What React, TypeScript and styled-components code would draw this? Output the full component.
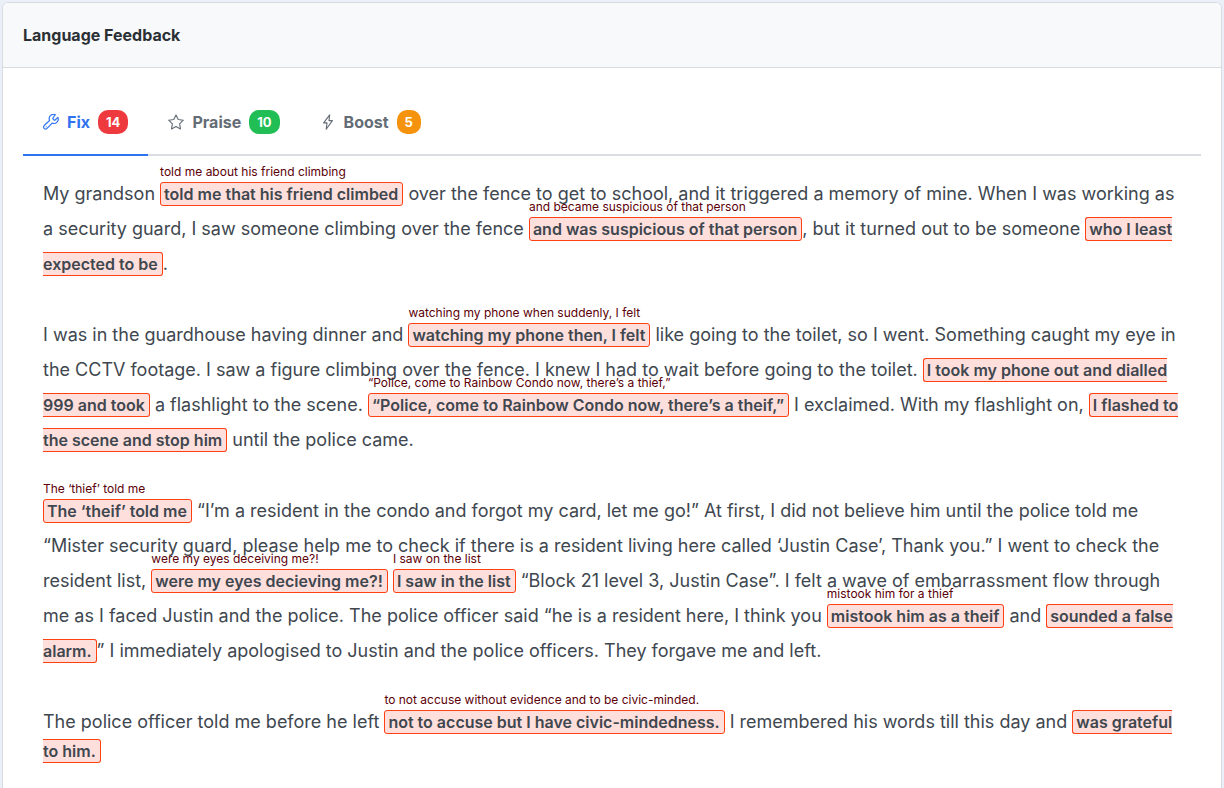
import React from "react";
import styled, { createGlobalStyle } from "styled-components";

const GlobalStyle = createGlobalStyle`
  *, *::before, *::after { box-sizing: border-box; }
  body {
    margin: 0;
    background: #ebeff7;
    color: #40474f;
    font-family: Inter, "Liberation Sans", sans-serif;
    font-size: 16px;
    line-height: 24px;
  }
`;

const Page = styled.main`
  display: flex;
  min-height: 100vh;
  padding: 2px 2px 0;
`;

const Card = styled.section`
  flex: 1;
  min-width: 0;
  background: #fff;
  border: 1px solid #d8dce2;
  border-bottom: 0;
  border-radius: 6px 6px 0 0;
`;

const CardHeader = styled.header`
  padding: 20px;
  background: #f7f9fb;
  border-bottom: 1px solid #d8dce2;
  border-radius: 5px 5px 0 0;
`;

const Title = styled.h1`
  margin: 0;
  font-size: 16px;
  line-height: 24px;
  font-weight: 700;
  color: #2b3035;
`;

const CardBody = styled.div`
  padding: 20px 20px 0;
`;

const TabList = styled.div`
  display: flex;
  border-bottom: 2px solid #d9dde1;
`;

const Tab = styled.button<{ $active?: boolean }>`
  display: flex;
  align-items: center;
  gap: 8px;
  margin: 0 0 -2px;
  padding: 22px 20px 20px;
  border: 0;
  border-bottom: 2px solid ${(p) => (p.$active ? "#2f73f0" : "transparent")};
  background: none;
  color: ${(p) => (p.$active ? "#2f73f0" : "#646c75")};
  font: 700 16px/24px Inter, "Liberation Sans", sans-serif;
  cursor: pointer;
`;

const TabIcon = styled.svg`
  width: 16px;
  height: 16px;
  fill: none;
  stroke: currentColor;
  stroke-linecap: round;
  stroke-linejoin: round;
`;

const Badge = styled.span<{ $color: string }>`
  padding: 0 8px;
  border-radius: 10px;
  background: ${(p) => p.$color};
  color: #fff;
  font-size: 13px;
  line-height: 24px;
  font-weight: 700;
`;

const Essay = styled.article`
  padding: 20px 20px 0;
`;

const Paragraph = styled.p`
  margin: 0;

  & + & {
    margin-top: 36px;
  }
`;

const Prose = styled.span`
  font-size: 18px;
  line-height: 35px;
`;

const Mark = styled.mark`
  position: relative;
  padding: 1px 4px 1px 3px;
  border: 1px solid #ff4013;
  border-radius: 3px;
  background: #ffdfdc;
  color: #40474f;
  font-size: 16px;
  font-weight: 600;
`;

const Suggestion = styled.span`
  position: absolute;
  left: -1px;
  bottom: 100%;
  color: #5c0007;
  font-size: 12px;
  line-height: 22px;
  font-weight: 400;
  white-space: nowrap;
`;

type Piece = string | { wrong: string; fix?: string };

const paragraphs: Piece[][] = [
  [
    "My grandson ",
    { wrong: "told me that his friend climbed", fix: "told me about his friend climbing" },
    " over the fence to get to school, and it triggered a memory of mine. When I was working as a security guard, I saw someone climbing over the fence ",
    { wrong: "and was suspicious of that person", fix: "and became suspicious of that person" },
    ", but it turned out to be someone ",
    { wrong: "who I least expected to be" },
    ".",
  ],
  [
    "I was in the guardhouse having dinner and ",
    { wrong: "watching my phone then, I felt", fix: "watching my phone when suddenly, I felt" },
    " like going to the toilet, so I went. Something caught my eye in the CCTV footage. I saw a figure climbing over the fence. I knew I had to wait before going to the toilet. ",
    { wrong: "I took my phone out and dialled 999 and took" },
    " a flashlight to the scene. ",
    { wrong: "“Police, come to Rainbow Condo now, there’s a theif,”", fix: "“Police, come to Rainbow Condo now, there’s a thief,”" },
    " I exclaimed. With my flashlight on, ",
    { wrong: "I flashed to the scene and stop him" },
    " until the police came.",
  ],
  [
    { wrong: "The ‘theif’ told me", fix: "The ‘thief’ told me" },
    " “I’m a resident in the condo and forgot my card, let me go!” At first, I did not believe him until the police told me “Mister security guard, please help me to check if there is a resident living here called ‘Justin Case’, Thank you.” I went to check the resident list, ",
    { wrong: "were my eyes decieving me?!", fix: "were my eyes deceiving me?!" },
    " ",
    { wrong: "I saw in the list", fix: "I saw on the list" },
    " “Block 21 level 3, Justin Case”. I felt a wave of embarrassment flow through me as I faced Justin and the police. The police officer said “he is a resident here, I think you ",
    { wrong: "mistook him as a theif", fix: "mistook him for a thief" },
    " and ",
    { wrong: "sounded a false alarm." },
    "” I immediately apologised to Justin and the police officers. They forgave me and left.",
  ],
  [
    "The police officer told me before he left ",
    { wrong: "not to accuse but I have civic-mindedness.", fix: "to not accuse without evidence and to be civic-minded." },
    " I remembered his words till this day and ",
    { wrong: "was grateful to him." },
  ],
];

const WrenchIcon = () => (
  <TabIcon viewBox="1 1 22 22" strokeWidth="1.6" aria-hidden="true">
    <path d="M14.7 6.3a1 1 0 0 0 0 1.4l1.6 1.6a1 1 0 0 0 1.4 0l3.77-3.77a6 6 0 0 1-7.94 7.94l-6.91 7.41a2.8 2.8 0 0 1-4-4l7.41-6.91a6 6 0 0 1 7.94-7.94z" />
    <path d="M5.4 18.5v.1" />
  </TabIcon>
);

const StarIcon = () => (
  <TabIcon viewBox="0 0 16 16" strokeWidth="1.1" aria-hidden="true">
    <path d="M8 .9 10.2 5.5 15.3 6.2 11.6 9.8 12.5 14.9 8 12.5 3.5 14.9 4.4 9.8.7 6.2 5.8 5.5Z" />
  </TabIcon>
);

const BoltIcon = () => (
  <TabIcon viewBox="0 0 16 16" strokeWidth="1.1" aria-hidden="true">
    <path d="M9.7.8 3.6 8.9H7L6.2 15.2 12.4 6.6H9Z" />
  </TabIcon>
);

const tabs = [
  { label: "Fix", count: 14, color: "#ee3a3e", Icon: WrenchIcon },
  { label: "Praise", count: 10, color: "#21bd55", Icon: StarIcon },
  { label: "Boost", count: 5, color: "#f5930f", Icon: BoltIcon },
];

export default function App() {
  return (
    <>
      <GlobalStyle />
      <Page>
        <Card>
          <CardHeader>
            <Title>Language Feedback</Title>
          </CardHeader>
          <CardBody>
            <TabList role="tablist">
              {tabs.map(({ label, count, color, Icon }, i) => (
                <Tab key={label} type="button" role="tab" aria-selected={i === 0} $active={i === 0}>
                  <Icon />
                  <span>{label}</span>
                  <Badge $color={color}>{count}</Badge>
                </Tab>
              ))}
            </TabList>
            <Essay>
              {paragraphs.map((pieces, i) => (
                <Paragraph key={i}>
                  {pieces.map((piece, j) =>
                    typeof piece === "string" ? (
                      <Prose key={j}>{piece}</Prose>
                    ) : (
                      <Mark key={j}>
                        {piece.fix && <Suggestion>{piece.fix}</Suggestion>}
                        {piece.wrong}
                      </Mark>
                    )
                  )}
                </Paragraph>
              ))}
            </Essay>
          </CardBody>
        </Card>
      </Page>
    </>
  );
}
